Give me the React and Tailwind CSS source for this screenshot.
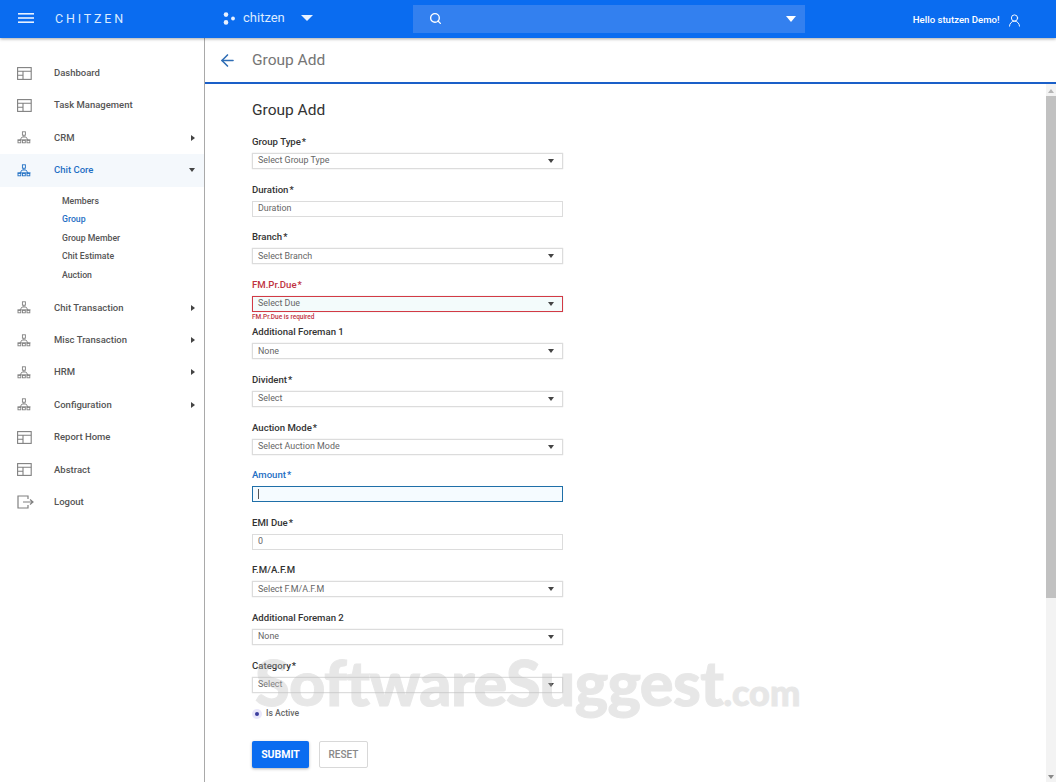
import { ArrowLeft, Search, UserRound } from 'lucide-react'

const MENU_TOP = [
  { label: 'Dashboard', icon: 'layout' },
  { label: 'Task Management', icon: 'layout' },
  { label: 'CRM', icon: 'tree', arrow: 'right' },
]

const MENU_BOTTOM = [
  { label: 'Chit Transaction', icon: 'tree', arrow: 'right' },
  { label: 'Misc Transaction', icon: 'tree', arrow: 'right' },
  { label: 'HRM', icon: 'tree', arrow: 'right' },
  { label: 'Configuration', icon: 'tree', arrow: 'right' },
  { label: 'Report Home', icon: 'layout' },
  { label: 'Abstract', icon: 'layout' },
  { label: 'Logout', icon: 'logout' },
]

const SUBMENU = ['Members', 'Group', 'Group Member', 'Chit Estimate', 'Auction']

const FIELDS = [
  { label: 'Group Type', req: true, value: 'Select Group Type', select: true },
  { label: 'Duration', req: true, value: 'Duration' },
  { label: 'Branch', req: true, value: 'Select Branch', select: true },
  { label: 'FM.Pr.Due', req: true, value: 'Select Due', select: true, state: 'error' },
  { label: 'Additional Foreman 1', value: 'None', select: true },
  { label: 'Divident', req: true, value: 'Select', select: true },
  { label: 'Auction Mode', req: true, value: 'Select Auction Mode', select: true },
  { label: 'Amount', req: true, value: '', state: 'focus' },
  { label: 'EMI Due', req: true, value: '0' },
  { label: 'F.M/A.F.M', value: 'Select F.M/A.F.M', select: true },
  { label: 'Additional Foreman 2', value: 'None', select: true },
  { label: 'Category', req: true, value: 'Select', select: true },
]

function MenuIcon({ type, active }) {
  const color = active ? '#1f6fc4' : '#808080'
  if (type === 'layout') {
    return (
      <svg width="15" height="13" viewBox="0 0 15 13" fill="none" stroke={color} strokeWidth="1.1">
        <rect x="0.6" y="0.6" width="13.6" height="11.8" />
        <path d="M0.6 4.2h13.6M6 4.2v8.2M0.6 8.2H6" />
      </svg>
    )
  }
  if (type === 'tree') {
    return (
      <svg width="14" height="13" viewBox="0 0 14 13" fill="none" stroke={color} strokeWidth="0.9">
        <rect x="5.4" y="0.8" width="3" height="3.4" />
        <path d="M6.9 4.2V6M3 9 5 6h4l2 3" />
        <path d="M0.5 8.8h13" />
        <rect x="1" y="9.4" width="2.8" height="2.4" />
        <rect x="5.5" y="9.4" width="2.8" height="2.4" />
        <rect x="10" y="9.4" width="2.8" height="2.4" />
      </svg>
    )
  }
  return (
    <svg width="17" height="14" viewBox="0 0 17 14" fill="none" stroke={color} strokeWidth="1.2">
      <path d="M11 4V1H1v12h10v-3" />
      <path d="M6 7h10M13 4.5 16 7l-3 2.5" />
    </svg>
  )
}

function Caret({ dir = 'down', className = '' }) {
  if (dir === 'right') {
    return <span className={`block w-0 h-0 border-y-[3px] border-y-transparent border-l-[4px] border-l-[#444] ${className}`} />
  }
  return <span className={`block w-0 h-0 border-x-[3.5px] border-x-transparent border-t-[4px] border-t-[#444] ${className}`} />
}

function MenuItem({ label, icon, arrow, active }) {
  return (
    <div className={`flex items-center h-[32.4px] pl-[17px] pr-[9px] ${active ? 'bg-[#f4f8fc]' : ''}`}>
      <span className="flex w-[37px] shrink-0">
        <MenuIcon type={icon} active={active} />
      </span>
      <span className={`flex-1 text-[9.5px] font-medium ${active ? 'text-[#1f6fc4]' : 'text-[#555]'}`}>{label}</span>
      {arrow && <Caret dir={arrow} />}
    </div>
  )
}

function Field({ label, req, value, select, state }) {
  const labelColor = state === 'error' ? 'text-[#c0333f]' : state === 'focus' ? 'text-[#1f6fc4]' : 'text-[#333]'
  const boxStyle =
    state === 'error'
      ? 'border-[#d23a45] bg-[#f3fbfb]'
      : state === 'focus'
        ? 'border-[#1f6fa8] bg-[#f5fbff]'
        : 'border-[#dcdcdc]'
  return (
    <div className="relative h-[47.6px]">
      <div className={`h-[20px] text-[9.6px] leading-[17px] font-medium ${labelColor}`}>
        {label}
        {req && <span className="ml-[1px]">*</span>}
      </div>
      <div className={`flex items-center justify-between h-[16px] pl-[5px] pr-[8px] border ${boxStyle} ${select ? 'shadow-[0_0_1px_#ccc]' : ''}`}>
        <span className="text-[8.9px] text-[#666]">
          {state === 'focus' ? <span className="block w-px h-[10px] bg-[#555]" /> : value}
        </span>
        {select && <Caret />}
      </div>
      {state === 'error' && (
        <div className="text-[6.5px] leading-[10px] font-medium text-[#c0333f]">FM.Pr.Due is required</div>
      )}
    </div>
  )
}

export default function App() {
  return (
    <div className="relative flex flex-col w-[1056px] h-[782px] overflow-hidden bg-white font-['Roboto',sans-serif]">
      {/* top bar */}
      <header className="z-10 flex items-center shrink-0 h-[38px] bg-[#0a6cf0] text-white shadow-[0_1px_3px_rgba(0,0,0,0.35)]">
        <svg className="ml-[18px] -mt-[3px] shrink-0" width="16" height="10" viewBox="0 0 16 10" fill="#e8f1ff">
          <rect width="16" height="1.6" />
          <rect y="4.2" width="16" height="1.6" />
          <rect y="8.4" width="16" height="1.6" />
        </svg>
        <span className="ml-[21px] w-[168px] text-[12.5px] tracking-[2.8px] text-[#dcebff]">CHITZEN</span>
        <svg width="13" height="13" viewBox="0 0 13 13" fill="#e8f1ff" className="shrink-0 -mt-[2px]">
          <circle cx="3" cy="2.6" r="2.3" />
          <circle cx="3" cy="10.4" r="2.3" />
          <circle cx="10" cy="6.5" r="1.9" />
        </svg>
        <span className="ml-[7px] -mt-[3px] text-[13px] text-[#dcebff]">chitzen</span>
        <span className="ml-[16px] -mt-[3px] w-0 h-0 border-x-[6px] border-x-transparent border-t-[6px] border-t-[#e8f1ff]" />
        <div className="flex items-center justify-between ml-[100px] w-[392px] h-[28px] -mt-[1px] pl-[16px] pr-[8px] bg-[#3380ef]">
          <Search size={13} strokeWidth={2.5} />
          <span className="w-0 h-0 border-x-[5.5px] border-x-transparent border-t-[6px] border-t-white mr-[1px]" />
        </div>
        <span className="ml-[108px] mt-[3px] text-[9.6px] font-medium">Hello stutzen Demo!</span>
        <UserRound size={15} strokeWidth={1.5} className="ml-[7px] mt-[3px]" />
      </header>

      <div className="flex flex-1 min-h-0">
        {/* side menu */}
        <aside className="shrink-0 w-[205px] pt-[19px] border-r border-[#a9a9a9]">
          {MENU_TOP.map((item) => (
            <MenuItem key={item.label} {...item} />
          ))}
          <MenuItem label="Chit Core" icon="tree" arrow="down" active />
          <div className="pt-[5.5px] pb-[7.5px] pl-[62px]">
            {SUBMENU.map((name) => (
              <div key={name} className={`h-[18.4px] leading-[18.4px] text-[8.7px] font-medium ${name === 'Group' ? 'text-[#1f6fc4]' : 'text-[#555]'}`}>
                {name}
              </div>
            ))}
          </div>
          {MENU_BOTTOM.map((item) => (
            <MenuItem key={item.label} {...item} />
          ))}
        </aside>

        <main className="flex flex-col flex-1 min-w-0">
          <div className="flex items-center shrink-0 h-[46px] border-b-2 border-[#1a5fc8]">
            <ArrowLeft size={19} strokeWidth={2} className="ml-[13px] text-[#2f6db5]" />
            <span className="ml-[15px] mt-[1px] text-[15.5px] text-[#757575]">Group Add</span>
          </div>

          <div className="flex flex-1 min-h-0">
            <div className="flex-1 pl-[47px] pt-[16px]">
              <h1 className="h-[33px] text-[15.5px] leading-[20px] text-[#333]">Group Add</h1>
              <div className="w-[311px]">
                {FIELDS.map((field) => (
                  <Field key={field.label} {...field} />
                ))}
                <label className="flex items-center h-[16px] mt-[1.5px] text-[8.6px] font-medium text-[#666]">
                  <span className="flex items-center justify-center w-[10px] h-[10px] rounded-full bg-[#e9e7fa]">
                    <span className="w-[4px] h-[4px] rounded-full bg-[#3a3d9e]" />
                  </span>
                  <span className="ml-[4px]">Is Active</span>
                </label>
                <div className="flex gap-[10px] mt-[19.5px]">
                  <button className="w-[57px] h-[27px] rounded-[2px] bg-[#0a6cf0] text-[10.5px] font-bold text-white shadow-[0_1px_3px_rgba(0,0,0,0.3)]">SUBMIT</button>
                  <button className="w-[49px] h-[27px] rounded-[2px] border border-[#d8d8d8] text-[10px] font-medium text-[#888]">RESET</button>
                </div>
              </div>
            </div>

            {/* scrollbar */}
            <div className="flex flex-col items-center shrink-0 w-[10px] bg-[#f3f3f3]">
              <span className="mt-[5px] w-0 h-0 border-x-[3.5px] border-x-transparent border-b-[4px] border-b-[#b5b5b5]" />
              <span className="mt-[3px] w-full h-[502px] bg-[#c1c1c1]" />
              <span className="mt-auto mb-[3px] w-0 h-0 border-x-[3.5px] border-x-transparent border-t-[4px] border-t-[#8a8a8a]" />
            </div>
          </div>
        </main>
      </div>

      {/* watermark */}
      <div className="absolute left-[255px] top-[642px] z-20 pointer-events-none whitespace-nowrap font-['Lato',sans-serif] font-black text-[#bdbdbd] opacity-35 [-webkit-text-stroke:1px_#bdbdbd]">
        <span className="text-[63px] leading-[80px] tracking-[-0.6px]">SoftwareSuggest</span>
        <span className="text-[36px] leading-[80px]">.com</span>
      </div>
    </div>
  )
}
